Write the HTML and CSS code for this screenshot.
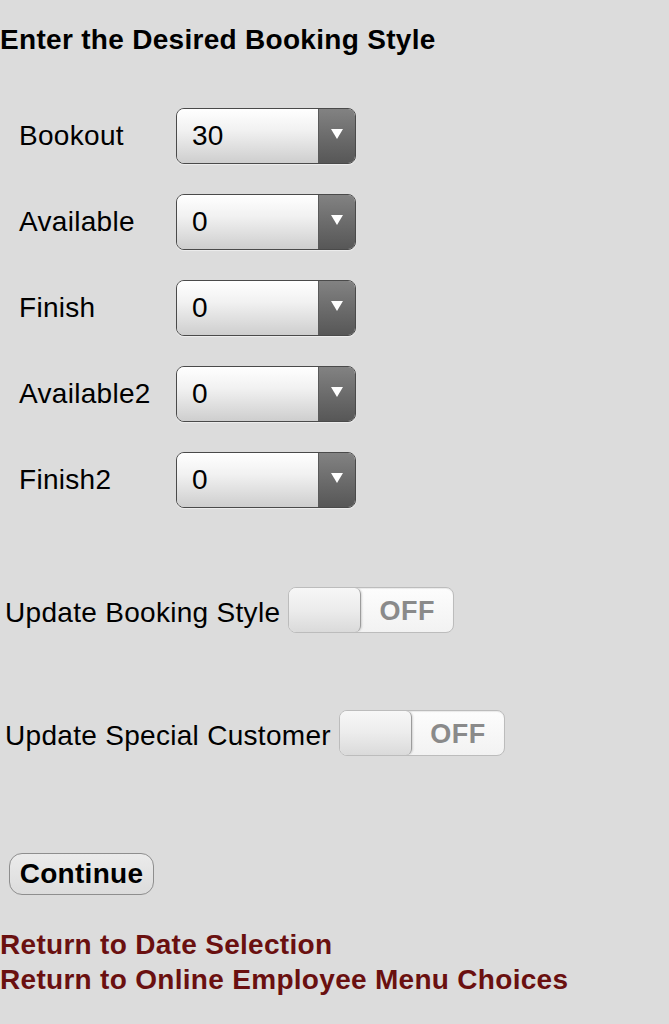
FILE: index.html
```html
<!DOCTYPE html>
<html>
<head>
<meta charset="utf-8">
<link rel="stylesheet" href="styles.css">
</head>
<body>
<h1 class="title">Enter the Desired Booking Style</h1>
<div class="fields">
  <div class="label">Bookout</div>
  <div class="select"><span class="value">30</span><span class="arrow"><svg width="12" height="10" viewBox="0 0 12 10"><polygon points="0,0 12,0 6,10" fill="#fff"/></svg></span></div>
  <div class="label">Available</div>
  <div class="select"><span class="value">0</span><span class="arrow"><svg width="12" height="10" viewBox="0 0 12 10"><polygon points="0,0 12,0 6,10" fill="#fff"/></svg></span></div>
  <div class="label">Finish</div>
  <div class="select"><span class="value">0</span><span class="arrow"><svg width="12" height="10" viewBox="0 0 12 10"><polygon points="0,0 12,0 6,10" fill="#fff"/></svg></span></div>
  <div class="label">Available2</div>
  <div class="select"><span class="value">0</span><span class="arrow"><svg width="12" height="10" viewBox="0 0 12 10"><polygon points="0,0 12,0 6,10" fill="#fff"/></svg></span></div>
  <div class="label">Finish2</div>
  <div class="select"><span class="value">0</span><span class="arrow"><svg width="12" height="10" viewBox="0 0 12 10"><polygon points="0,0 12,0 6,10" fill="#fff"/></svg></span></div>
</div>
<div class="toggle-row first">
  <span class="toggle-label">Update Booking Style</span>
  <span class="toggle"><span class="knob"></span><span class="off">OFF</span></span>
</div>
<div class="toggle-row second">
  <span class="toggle-label">Update Special Customer</span>
  <span class="toggle"><span class="knob"></span><span class="off">OFF</span></span>
</div>
<div class="actions">
  <button class="continue" type="button">Continue</button>
</div>
<div class="links">
  <a href="#" class="link">Return to Date Selection</a>
  <a href="#" class="link">Return to Online Employee Menu Choices</a>
</div>
</body>
</html>
```

FILE: styles.css
```css
html, body {
  margin: 0;
  padding: 0;
  background: #dcdcdc;
}
body {
  font-family: "Liberation Sans", Arial, sans-serif;
  font-size: 28px;
  line-height: 32px;
  letter-spacing: 0.3px;
  color: #000;
}
.title {
  margin: 0;
  padding-top: 24px;
  font-size: 28px;
  line-height: 32px;
  font-weight: bold;
}
.fields {
  margin-top: 52px;
  margin-left: 19px;
  display: grid;
  grid-template-columns: 157px 180px;
  grid-auto-rows: 56px;
  row-gap: 30px;
  align-items: center;
}
.label {
  font-size: 28px;
  line-height: 32px;
}
.select {
  box-sizing: border-box;
  width: 180px;
  height: 56px;
  border: 1.5px solid #4a4a4a;
  border-radius: 8px;
  display: flex;
  overflow: hidden;
  box-shadow: 0 1px 1px rgba(255,255,255,0.5);
}
.value {
  flex: 1;
  display: flex;
  align-items: center;
  padding-left: 15px;
  background: linear-gradient(#ffffff 0%, #f1f1f1 40%, #cecece 100%);
  border-right: 1px solid #5a5a5a;
}
.arrow {
  width: 36px;
  display: flex;
  align-items: center;
  justify-content: center;
  padding-bottom: 4px;
  box-sizing: border-box;
  background: linear-gradient(#828282 0%, #6c6c6c 50%, #575757 100%);
}
.toggle-row {
  display: flex;
  align-items: center;
  gap: 8px;
  padding-left: 5px;
}
.toggle-row.first {
  margin-top: 79px;
}
.toggle-row.second {
  margin-top: 77px;
}
.toggle-label {
  padding-top: 5px;
}
.toggle {
  box-sizing: border-box;
  width: 166px;
  height: 46px;
  border: 1px solid #bcbcbc;
  border-radius: 8px;
  background: linear-gradient(#fdfdfd, #f2f2f2);
  display: flex;
  overflow: hidden;
  box-shadow: inset 0 1px 1px rgba(0,0,0,0.08);
}
.knob {
  box-sizing: border-box;
  width: 72px;
  height: 100%;
  border-right: 1px solid #9c9c9c;
  border-radius: 0 6px 6px 0;
  background: linear-gradient(#f7f7f7 0%, #ececec 50%, #dadada 100%);
  box-shadow: 1px 0 2px rgba(0,0,0,0.15);
}
.off {
  flex: 1;
  display: flex;
  align-items: center;
  justify-content: center;
  font-weight: bold;
  font-size: 27px;
  letter-spacing: 0.5px;
  color: #8a8a8a;
  padding-top: 2px;
}
.actions {
  margin-top: 97px;
  padding-left: 9px;
}
.continue {
  box-sizing: border-box;
  width: 145px;
  height: 42px;
  padding: 0;
  margin: 0;
  border: 1px solid #8e8e8e;
  border-radius: 13px;
  background: linear-gradient(#ebebeb, #dcdcdc);
  font-family: "Liberation Sans", Arial, sans-serif;
  font-size: 28px;
  font-weight: bold;
  letter-spacing: 0.3px;
  line-height: 40px;
  color: #000;
}
.links {
  margin-top: 32px;
  display: flex;
  flex-direction: column;
}
.link {
  font-weight: bold;
  color: #6a1010;
  text-decoration: none;
  line-height: 35px;
}
```
